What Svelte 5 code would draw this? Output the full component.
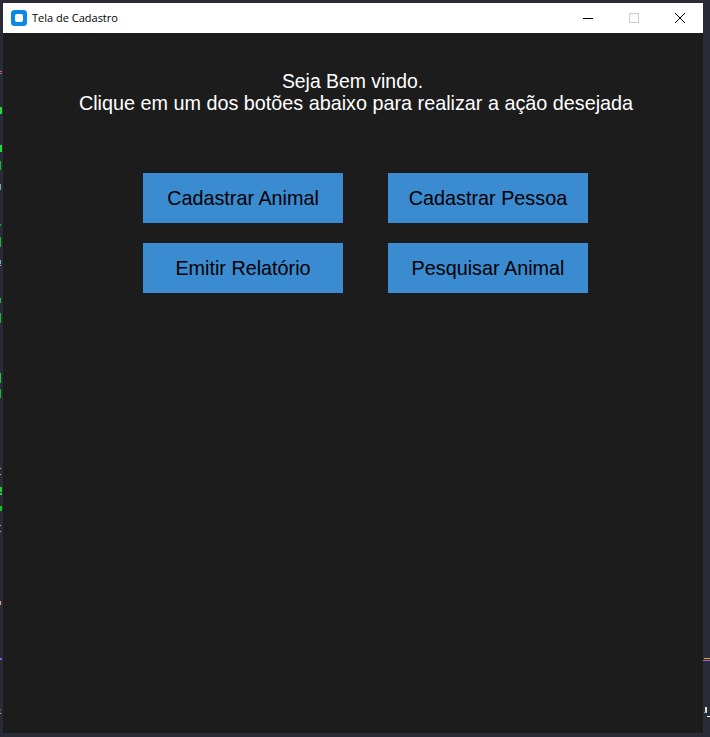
<script>
  const buttons = ['Cadastrar Animal', 'Cadastrar Pessoa', 'Emitir Relatório', 'Pesquisar Animal'];

  // bits of the window behind that show along the edges: [x, y, w, h, colour]
  const specks = [
    [0, 71, 2, 1, '#d0607a'], [0, 73, 2, 1, '#d0607a'],
    [0, 107, 2, 7, '#22d83a'], [0, 145, 2, 7, '#22d83a'], [0, 161, 1, 9, '#1fb832'],
    [0, 184, 1, 6, '#6fb0a8'], [0, 224, 1, 2, '#2aa03a'], [0, 237, 1, 10, '#1fb832'],
    [0, 260, 1, 4, '#6fb8c0'], [0, 265, 1, 1, '#b0c8d0'], [0, 298, 1, 5, '#1fb832'],
    [0, 313, 1, 10, '#1fb832'], [0, 373, 1, 10, '#1fc832'], [0, 389, 1, 9, '#1fb832'],
    [0, 468, 1, 1, '#e0b080'], [0, 474, 1, 1, '#e0b080'], [0, 487, 2, 5, '#22c83a'],
    [0, 493, 2, 2, '#22d83a'], [0, 506, 2, 5, '#18c030'], [0, 525, 1, 1, '#d8b088'],
    [0, 531, 1, 1, '#d8b088'], [0, 601, 1, 4, '#e8a878'], [0, 658, 2, 2, '#a050e0'],
    [0, 709, 1, 2, '#b03040'], [0, 713, 1, 1, '#d8b088'],
    [704, 658, 6, 1, '#e0a040'], [703, 660, 7, 1, '#a060e0'],
    [705, 707, 2, 6, '#e0e0d0'], [704, 712, 2, 1, '#40c0f0'], [707, 716, 3, 1, '#ffffff'],
  ];
</script>

<div class="desktop">
  {#each specks as s}
    <i class="speck" style="left:{s[0]}px;top:{s[1]}px;width:{s[2]}px;height:{s[3]}px;background:{s[4]}"></i>
  {/each}

  <div class="window">
    <div class="titlebar">
      <svg class="logo" width="16" height="16" viewBox="0 0 16 16">
        <rect width="16" height="16" rx="3.5" fill="#0a8ae6" />
        <rect x="4" y="4" width="8" height="8" rx="2" fill="#fff" />
      </svg>
      <span class="title">Tela de Cadastro</span>
      <div class="controls">
        <span class="ctl">
          <svg width="10" height="10" viewBox="0 0 10 10"><path d="M0 5.5h10" stroke="#000" /></svg>
        </span>
        <span class="ctl">
          <svg width="10" height="10" viewBox="0 0 10 10"><rect x=".5" y=".5" width="9" height="9" fill="none" stroke="#ccc" /></svg>
        </span>
        <span class="ctl">
          <svg width="10" height="10" viewBox="0 0 10 10"><path d="M0 0l10 10M10 0L0 10" stroke="#000" /></svg>
        </span>
      </div>
    </div>

    <div class="content">
      <div class="welcome">
        <p class="hello">Seja Bem vindo.</p>
        <p>Clique em um dos botões abaixo para realizar a ação desejada</p>
      </div>
      <div class="actions">
        {#each buttons as label}
          <button type="button">{label}</button>
        {/each}
      </div>
    </div>
  </div>
</div>

<style>
  :global(body) { margin: 0; background: #292b37; }
  .desktop { position: relative; width: 710px; height: 737px; box-sizing: border-box; padding: 3px 7px 4px 3px; overflow: hidden; }
  .speck { position: absolute; display: block; }
  .window { height: 730px; display: flex; flex-direction: column; background: #1c1c1c; }
  .titlebar { height: 30px; flex: none; display: flex; align-items: center; background: #fff; padding-left: 8px; }
  .title { margin-left: 5px; font: 11px/30px "Open Sans", "Liberation Sans", sans-serif; color: #000; }
  .controls { margin-left: auto; display: flex; }
  .ctl { width: 46px; height: 30px; display: flex; align-items: center; justify-content: center; }
  .ctl svg { display: block; shape-rendering: crispEdges; }
  .ctl:last-child svg { shape-rendering: auto; }
  .content { padding-top: 37px; font-family: "Liberation Sans", Arial, sans-serif; }
  .welcome { padding-left: 6px; text-align: center; color: #fff; font-size: 19.8px; line-height: 22px; }
  .welcome p { margin: 0; }
  .welcome .hello { padding-right: 7px; font-size: 19.4px; }
  .actions { display: grid; grid-template-columns: 200px 200px; grid-auto-rows: 50px; column-gap: 45px; row-gap: 20px; margin: 59px 0 0 140px; }
  button { border: 0; padding: 0; background: #3a8bd0; color: #000; font: 19.8px "Liberation Sans", Arial, sans-serif; }
</style>
